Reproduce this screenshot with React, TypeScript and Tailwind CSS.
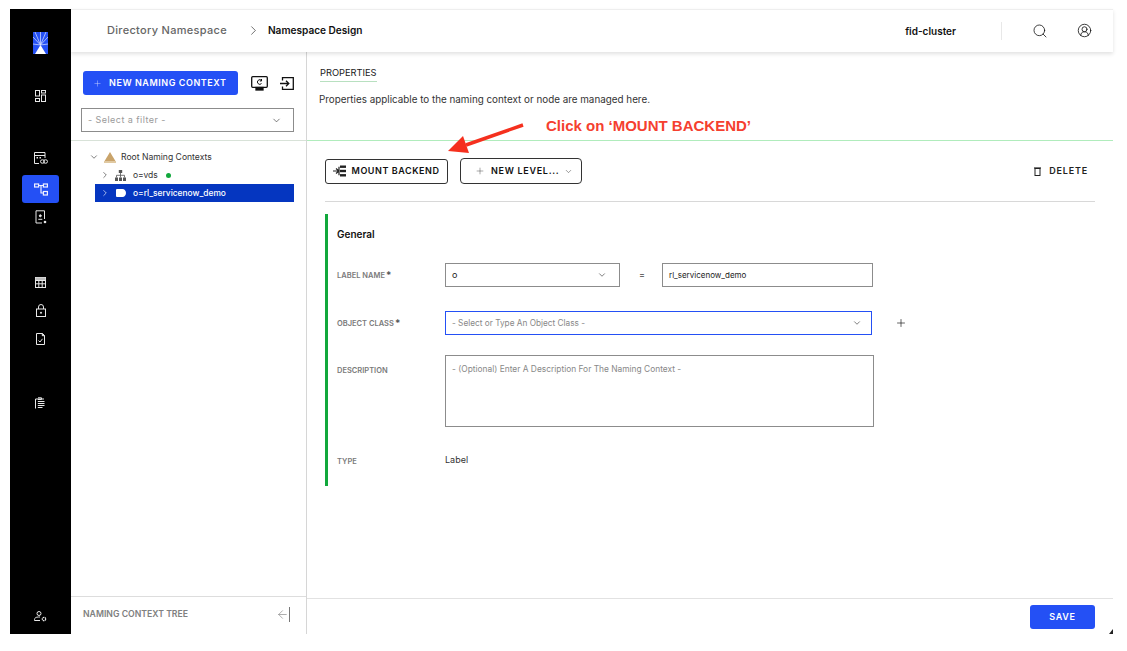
import React from "react";
import { ChevronDown, ChevronRight, Plus, Search, CircleUserRound, ArrowLeft } from "lucide-react";

const Logo = () => (
  <svg width="15" height="22" viewBox="0 0 15 22">
    <rect width="15" height="22" fill="#2450f5" />
    <g stroke="#dfe6ff" strokeWidth="0.7">
      <path d="M7.5 13V0M7.5 13L2 0M7.5 13L13 0M7.5 13L0 5M7.5 13L15 5M7.5 13L0 12M7.5 13L15 12" />
    </g>
    <path d="M7.5 13L13 22H2Z" fill="#fff" />
  </svg>
);

const NavIcon = ({ children, className = "" }: { children: React.ReactNode; className?: string }) => (
  <div className={`flex items-center justify-center ${className}`}>{children}</div>
);

const s = { fill: "none", stroke: "#e8e8e8", strokeWidth: 1 };

const DashIcon = () => (
  <svg width="11" height="12" viewBox="0 0 11 12" {...s}>
    <rect x="0.500" y="0.500" width="4" height="5.500" />
    <rect x="6.500" y="0.500" width="4" height="2.500" />
    <rect x="0.500" y="8.500" width="4" height="3" />
    <rect x="6.500" y="5" width="4" height="6.500" />
  </svg>
);

const LinkDocIcon = () => (
  <svg width="14" height="13" viewBox="0 0 14 13" {...s}>
    <path d="M5 11.500H0.500V0.500H11V6" />
    <path d="M0.500 3.500H11" />
    <rect x="2.500" y="5" width="1.500" height="1.500" fill="#e8e8e8" stroke="none" />
    <rect x="5.500" y="5" width="1.500" height="1.500" fill="#e8e8e8" stroke="none" />
    <rect x="6.500" y="7.800" width="4" height="3.400" rx="1.700" />
    <rect x="9.500" y="7.800" width="4" height="3.400" rx="1.700" />
  </svg>
);

const PersonDocIcon = () => (
  <svg width="12" height="14" viewBox="0 0 12 14" {...s}>
    <path d="M9.500 9V0.800H1V13H7" />
    <circle cx="5.300" cy="5.800" r="1" fill="#e8e8e8" />
    <path d="M3.300 9.300h4" />
    <circle cx="10" cy="12" r="1.300" fill="#e8e8e8" stroke="none" />
  </svg>
);

const TableIcon = () => (
  <svg width="11" height="11" viewBox="0 0 11 11" {...s}>
    <rect x="0.500" y="0.500" width="10" height="10" />
    <rect x="0.500" y="0.500" width="10" height="2.500" fill="#bdbdbd" stroke="none" />
    <path d="M0.500 3.500H10.500M0.500 6.800H10.500M3.800 3.500V10.500M7.200 3.500V10.500" />
  </svg>
);

const LockIcon = () => (
  <svg width="10" height="13" viewBox="0 0 10 13" {...s}>
    <rect x="0.500" y="5" width="9" height="7.500" />
    <path d="M2.500 5V3a2.500 2.500 0 0 1 5 0v2" />
    <circle cx="5" cy="8.700" r="1" fill="#e8e8e8" stroke="none" />
  </svg>
);

const FileCheckIcon = () => (
  <svg width="9" height="12" viewBox="0 0 9 12" {...s}>
    <path d="M0.500 0.500H6.500L8.500 2.500V11.500H0.500Z" />
    <path d="M6.300 0.500V2.700H8.500" fill="#e8e8e8" />
    <path d="M2.500 7.500L4 9L6.500 5.800" />
  </svg>
);

const ClipListIcon = () => (
  <svg width="10" height="12" viewBox="0 0 10 12" {...s}>
    <path d="M0.500 11.500V2H9" />
    <path d="M3 0.800H6.500V2.500H3" />
    <path d="M2.800 4.500H9.500M2.800 6.500H9.500M2.800 8.500H9.500M2.800 10.500H7.500" />
  </svg>
);

const UserGearIcon = () => (
  <svg width="13" height="11" viewBox="0 0 13 11" {...s}>
    <circle cx="5" cy="2.500" r="2" />
    <path d="M0.500 9.500V8.500C0.500 7 2 6 4.500 6H6" />
    <path d="M0.500 9.500H6" />
    <circle cx="10" cy="8" r="1.700" strokeWidth="1.200" strokeDasharray="1.500 0.500" />
  </svg>
);

const MountIcon = () => (
  <svg width="13" height="12" viewBox="0 0 13 12" fill="#222">
    <rect x="7" y="0.500" width="6" height="2.400" />
    <rect x="7" y="4.800" width="6" height="2.400" />
    <rect x="7" y="9.100" width="6" height="2.400" />
    <path d="M0 6h5M3 3.500L6 6 3 8.500M6 1.700v8.600" stroke="#222" strokeWidth="1.200" fill="none" />
  </svg>
);

const TagIcon = () => (
  <svg width="10" height="8" viewBox="0 0 10 8" fill="#fff">
    <path d="M1 0h5.500C8.500 0 10 1.800 10 4s-1.500 4-3.500 4H1a1 1 0 0 1-1-1V1a1 1 0 0 1 1-1z" />
  </svg>
);

const RootIcon = () => (
  <svg width="12" height="11" viewBox="0 0 12 11">
    <path d="M6 0L12 10H0Z" fill="#c9a36a" />
    <rect x="0" y="9" width="12" height="2" fill="#e0c9a2" />
  </svg>
);

const TreeIcon = () => (
  <svg width="11" height="11" viewBox="0 0 11 11" fill="#555">
    <rect x="3.800" y="0" width="3.400" height="3" />
    <rect x="0" y="7.500" width="3" height="3.500" />
    <rect x="4" y="7.500" width="3" height="3.500" />
    <rect x="8" y="7.500" width="3" height="3.500" />
    <path d="M5.500 3V7.500M1.500 7.500V5.300H9.500V7.500" stroke="#555" strokeWidth="0.800" fill="none" />
  </svg>
);

const ScreenIcon = () => (
  <svg width="17" height="15" viewBox="0 0 17 15" fill="none" stroke="#111" strokeWidth="1.300">
    <rect x="0.700" y="0.700" width="15.600" height="10.600" rx="1" />
    <rect x="5" y="11.500" width="7" height="2.500" fill="#111" />
    <path d="M10.500 4.500A2.300 2.300 0 1 0 10.500 7.500M10.500 3v2H8.800" strokeWidth="1" />
  </svg>
);

const EnterIcon = () => (
  <svg width="14" height="13" viewBox="0 0 14 13" fill="none" stroke="#111" strokeWidth="1.300">
    <path d="M2.500 3.500V0.700H13.300V12.300H2.500V9.500" />
    <path d="M0 6.500H8.500M6 3.800L8.800 6.500L6 9.200" />
  </svg>
);

const BinIcon = () => (
  <svg width="7" height="9" viewBox="0 0 7 9" fill="none" stroke="#222" strokeWidth="1">
    <path d="M0 1H7" strokeWidth="1.200" />
    <rect x="1" y="1.500" width="5" height="7" />
  </svg>
);

const FieldLabel = ({ text, star }: { text: string; star?: boolean }) => (
  <div className={`w-[108px] shrink-0 text-[7.500px] font-semibold text-[#7a7a7a] flex items-start ${star ? "pt-[2px]" : ""}`}>
    <span>{text}</span>
    {star && <span className="text-[10px] leading-[10px] ml-[1px] text-[#555]">*</span>}
  </div>
);

export default function App() {
  return (
    <div className="w-[1127px] h-[651px] bg-white overflow-hidden pl-[10px] pt-[9px] relative font-['Inter','Liberation_Sans',sans-serif]">
      <div className="w-[1103px] h-[625px] flex">
        {/* Sidebar */}
        <aside className="w-[61px] shrink-0 bg-black flex flex-col items-center">
          <div className="mt-[23px] mb-[35px] h-[22px] flex"><Logo /></div>
          <NavIcon className="h-[14px]"><DashIcon /></NavIcon>
          <NavIcon className="mt-[47px] h-[16px]"><LinkDocIcon /></NavIcon>
          <div className="mt-[9px] w-[37px] h-[28px] rounded-[3px] bg-[#2450f5] flex items-center justify-center">
            <svg width="14" height="13" viewBox="0 0 14 13" fill="none" stroke="#f0f0ff" strokeWidth="1.200">
              <rect x="0.600" y="1" width="4" height="3" />
              <rect x="9.400" y="1" width="4" height="3" />
              <rect x="9.400" y="8.500" width="4" height="3.500" />
              <path d="M4.600 2.500H9.400M7 2.500V10H9.400" />
            </svg>
          </div>
          <NavIcon className="mt-[6px] h-[15px]"><PersonDocIcon /></NavIcon>
          <NavIcon className="mt-[51px] h-[14px]"><TableIcon /></NavIcon>
          <NavIcon className="mt-[14px] h-[15px]"><LockIcon /></NavIcon>
          <NavIcon className="mt-[13px] h-[15px]"><FileCheckIcon /></NavIcon>
          <NavIcon className="mt-[49px] h-[15px] pr-[2px]"><ClipListIcon /></NavIcon>
          <NavIcon className="mt-auto mb-[10px] h-[15px]"><UserGearIcon /></NavIcon>
        </aside>

        {/* Main */}
        <div className="flex-1 flex flex-col min-w-0">
          <header className="h-[43px] shrink-0 flex items-center border-t border-[#eeeeee] shadow-[0_2px_4px_rgba(0,0,0,0.12)] z-10 bg-white">
            <span className="ml-[36px] pb-[2px] text-[11px] font-medium tracking-[0.3px] text-[#666]">Directory Namespace</span>
            <ChevronRight size={15} strokeWidth={1.200} className="ml-[19px] mb-[1px] text-[#444]" />
            <span className="ml-[7px] pb-[1px] text-[10.100px] font-semibold text-[#111]">Namespace Design</span>
            <span className="ml-auto mr-[45px] text-[10px] font-semibold text-[#111]">fid-cluster</span>
            <div className="w-px h-[18px] bg-[#e8e8e8]" />
            <Search size={16} strokeWidth={1.200} className="ml-[30px] mb-[1px] text-[#111]" />
            <CircleUserRound size={15} strokeWidth={1.300} className="ml-[29px] mb-[1px] mr-[21px] text-[#111]" />
          </header>

          <div className="flex-1 flex min-h-0">
            {/* Left panel */}
            <section className="w-[236px] shrink-0 border-r border-[#d6d6d6] flex flex-col">
              <div className="h-[89px] shrink-0 border-b border-[#d8e2d8] px-[10px] pt-[19px]">
                <div className="flex items-center">
                  <button className="ml-[2px] w-[155px] h-[24px] rounded-[3px] bg-[#2450f5] text-white flex items-center text-[9px] font-semibold tracking-[0.55px]">
                    <Plus size={9} strokeWidth={1.300} className="ml-[10px] mr-[7px] text-[#c8d2ff]" />
                    NEW NAMING CONTEXT
                  </button>
                  <span className="ml-[13px] flex"><ScreenIcon /></span>
                  <span className="ml-[12px] flex"><EnterIcon /></span>
                </div>
                <div className="mt-[13px] w-[213px] h-[24px] border border-[#8c8c8c] flex items-center justify-between pl-[6px] pr-[11px] text-[9px] tracking-[0.45px] text-[#9a9a9a]">
                  <span>- Select a filter -</span>
                  <ChevronDown size={11} strokeWidth={1.400} className="text-[#333]" />
                </div>
              </div>

              <div className="flex-1 pt-[9px] text-[8.600px] text-[#333]">
                <div className="h-[14px] flex items-center ml-[18px]">
                  <ChevronDown size={10} strokeWidth={1.500} className="text-[#333]" />
                  <span className="ml-[5px] flex"><RootIcon /></span>
                  <span className="ml-[5px]">Root Naming Contexts</span>
                </div>
                <div className="h-[18px] mt-[2px] flex items-center ml-[29px]">
                  <ChevronRight size={10} strokeWidth={1.500} className="text-[#333]" />
                  <span className="ml-[5px] flex"><TreeIcon /></span>
                  <span className="ml-[7px] text-[8.500px]">o=vds</span>
                  <span className="ml-[8px] w-[5px] h-[5px] rounded-full bg-[#11a83c]" />
                </div>
                <div className="h-[18px] ml-[24px] w-[199px] bg-[#0536c0] flex items-center pl-[5px] text-white font-medium">
                  <ChevronRight size={10} strokeWidth={1.500} />
                  <span className="ml-[6px] flex"><TagIcon /></span>
                  <span className="ml-[7px] text-[8.400px]">o=rl_servicenow_demo</span>
                </div>
              </div>

              <div className="h-[38px] shrink-0 border-t border-[#dddddd] flex items-center justify-between pl-[12px] pr-[16px] pb-[2px]">
                <span className="text-[8.700px] font-semibold text-[#808080]">NAMING CONTEXT TREE</span>
                <div className="flex items-center text-[#777]">
                  <ArrowLeft size={13} strokeWidth={1.100} />
                  <div className="w-px h-[15px] bg-[#777]" />
                </div>
              </div>
            </section>

            {/* Right panel */}
            <section className="flex-1 min-w-0 flex flex-col">
              <div className="h-[89px] shrink-0 border-b border-[#b0ecbc] pl-[12px] pt-[14px]">
                <div className="w-fit ml-[1px] text-[9.300px] text-[#222] pb-[1px] border-b border-[#b8e0c0]">PROPERTIES</div>
                <p className="mt-[10px] text-[9.850px] text-[#333]">Properties applicable to the naming context or node are managed here.</p>
              </div>

              <div className="flex-1 min-h-0 px-[18px] pt-[17px]">
                <div className="flex items-center h-[26px]">
                  <button className="w-[123px] h-[25px] rounded-[3px] border border-[#333] flex items-center justify-center text-[9px] font-semibold tracking-[0.55px] text-[#111] pr-[1px]">
                    <MountIcon />
                    <span className="ml-[6px]">MOUNT BACKEND</span>
                  </button>
                  <button className="ml-[12px] w-[122px] h-[26px] rounded-[4px] border border-[#333] flex items-center text-[9px] font-semibold tracking-[0.7px] text-[#111]">
                    <Plus size={10} strokeWidth={1.100} className="ml-[14px] text-[#444]" />
                    <span className="ml-[6px]">NEW LEVEL...</span>
                    <ChevronDown size={9} strokeWidth={1.300} className="ml-[5px] text-[#333]" />
                  </button>
                  <div className="ml-auto mr-[7px] flex items-center text-[9px] font-semibold tracking-[0.8px] text-[#222]">
                    <BinIcon />
                    <span className="ml-[8px]">DELETE</span>
                  </div>
                </div>
                <div className="mt-[17px] h-px bg-[#d8d8d8]" />

                <div className="mt-[12px] h-[272px] border-l-[3px] border-[#11a83c] pl-[9px] pt-[14px]">
                  <h2 className="text-[10px] font-semibold text-[#111] leading-[12px]">General</h2>
                  <div className="mt-[23px] flex items-center h-[24px]">
                    <FieldLabel text="LABEL NAME" star />
                    <div className="w-[175px] h-[24px] border border-[#8c8c8c] flex items-center justify-between pl-[6px] pr-[12px] text-[9px] text-[#222]">
                      <span>o</span>
                      <ChevronDown size={10} strokeWidth={1.500} className="text-[#333]" />
                    </div>
                    <span className="ml-[19px] w-[23px] text-[9px] text-[#444]">=</span>
                    <div className="w-[211px] h-[24px] border border-[#8c8c8c] flex items-center pl-[6px] text-[8px] text-[#222]">rl_servicenow_demo</div>
                  </div>
                  <div className="mt-[24px] flex items-center h-[24px]">
                    <FieldLabel text="OBJECT CLASS" star />
                    <div className="w-[427px] h-[24px] border border-[#2450f5] flex items-center justify-between pl-[6px] pr-[9px] text-[8.250px] text-[#888]">
                      <span>- Select or Type An Object Class -</span>
                      <ChevronDown size={10} strokeWidth={1.500} className="text-[#333]" />
                    </div>
                    <Plus size={12} strokeWidth={1.300} className="ml-[23px] text-[#111]" />
                  </div>
                  <div className="mt-[20px] flex items-start">
                    <div className="pt-[10px]"><FieldLabel text="DESCRIPTION" /></div>
                    <div className="w-[429px] h-[72px] border border-[#8c8c8c] pl-[6px] pt-[7px] text-[8.400px] text-[#888]">- (Optional) Enter A Description For The Naming Context -</div>
                  </div>
                  <div className="mt-[26px] flex items-center">
                    <FieldLabel text="TYPE" />
                    <span className="text-[9px] text-[#333] pb-[4px]">Label</span>
                  </div>
                </div>
              </div>

              <div className="h-[36px] shrink-0 border-t border-[#e2e2e2] flex items-start justify-end pr-[18px] pt-[6px]">
                <button className="w-[65px] h-[24px] rounded-[3px] bg-[#2450f5] text-white text-[9px] font-semibold tracking-[0.7px]">SAVE</button>
              </div>
            </section>
          </div>
        </div>
      </div>

      {/* Annotation */}
      <svg className="absolute left-[446px] top-[120px]" width="80" height="36" viewBox="0 0 80 36">
        <path d="M77 5L20 25" stroke="#f5301e" strokeWidth="3.500" />
        <path d="M2 31L17 16L23 33Z" fill="#f5301e" />
      </svg>
      <span className="absolute left-[546px] top-[117px] text-[15px] leading-[18px] font-bold text-[#f5402f] font-['Liberation_Sans',sans-serif]">Click on ‘MOUNT BACKEND’</span>
      <svg className="absolute left-[1109px] top-[629px]" width="4" height="5" viewBox="0 0 4 5">
        <path d="M4 0V5H0Z" fill="#222" />
      </svg>
    </div>
  );
}
